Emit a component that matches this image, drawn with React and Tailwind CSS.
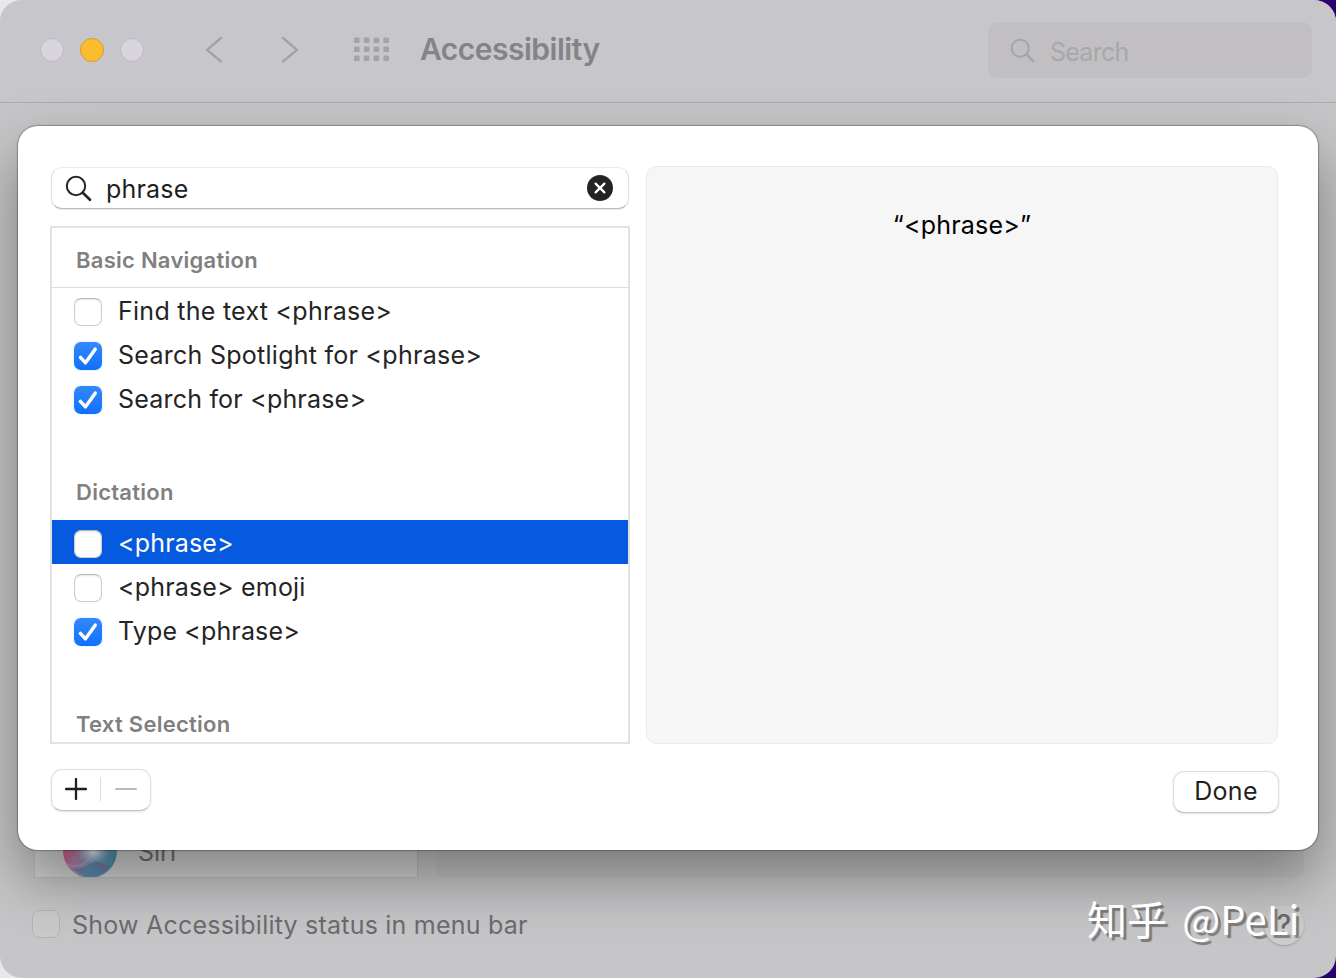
import { useState } from "react";

const sections = [
  {
    title: "Basic Navigation",
    pinned: true,
    commands: [
      { label: "Find the text <phrase>", checked: false, tracking: "tracking-[0.27px]" },
      { label: "Search Spotlight for <phrase>", checked: true, tracking: "tracking-[0.27px]" },
      { label: "Search for <phrase>", checked: true, tracking: "tracking-[0.2px]" },
    ],
  },
  {
    title: "Dictation",
    commands: [
      { label: "<phrase>", checked: false, tracking: "tracking-[0.18px]" },
      { label: "<phrase> emoji", checked: false, tracking: "tracking-[0.18px]" },
      { label: "Type <phrase>", checked: true, tracking: "tracking-[0.15px]" },
    ],
  },
  {
    title: "Text Selection",
    commands: [],
  },
];

export default function App() {
  return (
    <div className="relative h-[978px] w-[1336px] overflow-hidden bg-[linear-gradient(90deg,#e8e8ea_50%,#2a0070_50%)] font-[Inter,'Liberation_Sans',sans-serif]">
      <PreferencesWindow />
      <CommandsSheet />
      <Watermark />
    </div>
  );
}

function PreferencesWindow() {
  return (
    <div className="flex h-full flex-col overflow-hidden rounded-[22px] bg-[#c6c6c8]">
      <header className="flex h-[103px] shrink-0 items-start border-b border-[#acacae] bg-[#c7c6cb] pt-[22px] pr-6 pl-10">
        <div className="flex h-14 items-center gap-4">
          <span className="size-6 rounded-full border border-[#bdb9c2] bg-[#d8d3dd]" />
          <span className="size-6 rounded-full border border-[#d99b2b] bg-[#fdbc2e]" />
          <span className="size-6 rounded-full border border-[#bdb9c2] bg-[#d8d3dd]" />
        </div>

        <svg className="mt-[14px] ml-[61px] h-7 w-[94px]" viewBox="0 0 94 28" fill="none" stroke="#a3a2a6" strokeWidth="2.4" strokeLinecap="round" strokeLinejoin="round">
          <path d="M16 2 2 13.8 16 25.5" />
          <path d="M78 2 92 13.8 78 25.5" />
        </svg>

        <svg className="mt-[15px] ml-[55px] h-[25px] w-9" viewBox="0 0 36 25" fill="#a3a2a6">
          {[0, 9.8, 19.6, 29.4].map((x) =>
            [0.5, 9.5, 18.5].map((y) => (
              <rect key={`${x}-${y}`} x={x} y={y} width="5.6" height="5.6" rx="1.2" />
            ))
          )}
        </svg>

        <h1 className="ml-[30px] text-[30px] leading-[54px] font-semibold tracking-[-0.5px] whitespace-nowrap text-[#848388]">
          Accessibility
        </h1>

        <div className="ml-auto flex h-14 w-[324px] items-center rounded-[10px] bg-[#c1bfc1] pl-[22px]">
          <SearchIcon className="size-[25px] text-[#a5a4a7]" strokeWidth="2.1" />
          <span className="mt-[3px] ml-[15px] text-[25px] leading-8 tracking-[-0.75px] text-[#a8a7aa]">Search</span>
        </div>
      </header>

      <main className="flex flex-1 gap-[18px] pt-12 pr-8 pl-[34px]">
        <div className="flex w-[384px] items-end overflow-hidden border border-[#bcbcbd] bg-[#d2d2d2] pl-7">
          <SiriIcon />
          <span className="mb-[9px] ml-[21px] text-[25px] leading-8 text-[#6f6f72]">Siri</span>
        </div>
        <div className="flex-1 rounded-[8px] border border-[#c1c1c3] bg-[#c1c1c3]" />
      </main>

      <footer className="flex h-[100px] shrink-0 items-start justify-between pt-[31px] pr-8 pl-8">
        <div className="flex items-center">
          <span className="mb-0.5 size-7 rounded-[7px] border border-[#b3b3b4] bg-[#cacaca]" />
          <span className="ml-3 text-[25px] leading-8 tracking-[0.22px] whitespace-nowrap text-[#6c6c6f]">
            Show Accessibility status in menu bar
          </span>
        </div>
        <span className="mt-[-4px] flex size-10 items-center justify-center rounded-full bg-[#cdcdce] text-[28px] font-medium text-[#69696b] shadow-[0_1px_2px_rgba(0,0,0,0.2)]">
          ?
        </span>
      </footer>
    </div>
  );
}

function CommandsSheet() {
  const [query, setQuery] = useState("phrase");
  const [selected, setSelected] = useState("<phrase>");

  return (
    <section className="absolute top-[126px] left-[18px] flex h-[724px] w-[1300px] flex-col rounded-[20px] bg-white pt-10 pr-10 pl-8 shadow-[0_0_0_1px_rgba(0,0,0,0.16),0_0_2px_1px_rgba(0,0,0,0.14),0_28px_60px_rgba(0,0,0,0.38)]">
      <div className="flex h-[578px] gap-4">
        <div className="flex w-[580px] flex-col gap-[17px]">
          <div className="mx-px mt-px flex h-[42px] shrink-0 items-center rounded-[11px] border border-t-[#ececec] border-r-[#e2e2e2] border-b-[#bcbcbc] border-l-[#e2e2e2] bg-white pr-[15px] pl-[13px] shadow-[0_1px_1px_rgba(0,0,0,0.08)]">
            <SearchIcon className="size-[27px] shrink-0 text-[#262626]" strokeWidth="2" />
            <input
              className="mt-px ml-[14px] w-0 flex-1 bg-transparent text-[25px] leading-8 tracking-[0.2px] text-[#1f1f1f] outline-none"
              value={query}
              onChange={(event) => setQuery(event.target.value)}
            />
            <button type="button" aria-label="Clear" onClick={() => setQuery("")}>
              <svg className="size-[26px]" viewBox="0 0 26 26">
                <circle cx="13" cy="13" r="13" fill="#242424" />
                <path d="m8.6 8.6 8.8 8.8m0-8.8-8.8 8.8" stroke="#fff" strokeWidth="2.3" strokeLinecap="round" />
              </svg>
            </button>
          </div>

          <div className="h-[518px] overflow-hidden border-2 border-[#e2e2e2]">
            {sections.map((section) => (
              <div key={section.title} className="mb-10">
                <h2
                  className={`h-[60px] pt-4 pl-6 text-[22px] leading-8 font-semibold tracking-[0.26px] text-[#808080] ${
                    section.pinned ? "border-b border-[#dcdcdc]" : ""
                  }`}
                >
                  {section.title}
                </h2>
                {section.commands.map((command) => (
                  <CommandRow
                    key={command.label}
                    command={command}
                    selected={command.label === selected}
                    onSelect={() => setSelected(command.label)}
                  />
                ))}
              </div>
            ))}
          </div>
        </div>

        <div className="flex-1 rounded-[10px] border border-[#ebebeb] bg-[#f6f6f6] pt-[42px] text-center text-[25px] leading-8 tracking-[0.2px] text-black">
          “{selected}”
        </div>
      </div>

      <div className="mt-[25px] flex items-start justify-between pl-px">
        <div className="flex h-[42px] w-[100px] items-center rounded-[11px] border border-[#dedede] border-b-[#c4c4c4] pb-[2px] shadow-[0_1px_2px_rgba(0,0,0,0.12)]">
          <button type="button" aria-label="Add" className="flex w-[47px] items-center justify-center">
            <svg className="size-[22px]" viewBox="0 0 22 22" stroke="#1f1f1f" strokeWidth="2.3" strokeLinecap="round">
              <path d="M11 1v20M1 11h20" />
            </svg>
          </button>
          <span className="ml-px h-6 w-px bg-[#dcdcdc]" />
          <button type="button" aria-label="Remove" className="flex w-[49px] items-center justify-center">
            <svg className="size-[22px]" viewBox="0 0 22 22" stroke="#b9b9b9" strokeWidth="2" strokeLinecap="round">
              <path d="M1 11h20" />
            </svg>
          </button>
        </div>

        <button
          type="button"
          className="mt-0.5 mr-[-1px] h-[42px] w-[106px] rounded-[11px] border border-[#dedede] border-b-[#c4c4c4] bg-white pb-[2px] text-[25px] leading-8 tracking-[0.3px] text-[#1f1f1f] shadow-[0_1px_2px_rgba(0,0,0,0.12)]"
        >
          Done
        </button>
      </div>
    </section>
  );
}

function CommandRow({ command, selected, onSelect }) {
  return (
    <div
      className={`flex h-11 items-center pl-[22px] ${
        selected ? "bg-[#065ae0] text-white" : "text-[#242424]"
      }`}
      onClick={onSelect}
    >
      <Checkbox checked={command.checked} />
      <span className={`mt-0.5 ml-4 text-[25px] leading-8 whitespace-nowrap ${command.tracking}`}>
        {command.label}
      </span>
    </div>
  );
}

function Checkbox({ checked }) {
  if (!checked) {
    return (
      <span className="mt-1 size-7 shrink-0 rounded-[7px] border border-[#cccccc] border-t-[#b8b8b8] bg-white shadow-[inset_0_1px_2px_rgba(0,0,0,0.1)]" />
    );
  }

  return (
    <span className="mt-1 size-7 shrink-0 rounded-[7px] bg-linear-to-b from-[#3289fb] to-[#0f6ffb] shadow-[0_0_2px_rgba(20,115,255,0.3)]">
      <svg className="size-7" viewBox="0 0 28 28" fill="none" stroke="#fff" strokeWidth="3.5" strokeLinecap="round" strokeLinejoin="round">
        <path d="m6.4 15.4 5.1 5.4L21.2 7.2" />
      </svg>
    </span>
  );
}

function SearchIcon({ className, strokeWidth }) {
  return (
    <svg className={className} viewBox="0 0 27 27" fill="none" stroke="currentColor" strokeWidth={strokeWidth} strokeLinecap="round">
      <circle cx="11" cy="11" r="9.2" />
      <path d="m17.8 17.8 7.2 7" strokeWidth="2.7" />
    </svg>
  );
}

function SiriIcon() {
  return (
    <svg className="h-[54px] w-[54px]" viewBox="0 0 54 54">
      <defs>
        <linearGradient id="siri" x1="0" x2="1" y1="0.3" y2="0.7">
          <stop offset="0" stopColor="#e04f86" />
          <stop offset="0.3" stopColor="#b882ac" />
          <stop offset="0.6" stopColor="#7ba3c4" />
          <stop offset="1" stopColor="#4a8fa8" />
        </linearGradient>
        <radialGradient id="siriGlow">
          <stop offset="0" stopColor="#fff" stopOpacity="0.95" />
          <stop offset="1" stopColor="#b9d5ea" stopOpacity="0" />
        </radialGradient>
      </defs>
      <circle cx="27" cy="28" r="27" fill="url(#siri)" />
      <path d="M10 46Q22 46 32 37 42 42 48 43 38 56 22 54Z" fill="#5583a8" opacity="0.7" />
      <path d="M3 41Q18 48 29 32" fill="none" stroke="#d5a5c2" strokeWidth="1.2" opacity="0.7" />
      <path d="M36 42 44 45" stroke="#ca5781" strokeWidth="2" opacity="0.7" />
      <ellipse cx="30" cy="29" rx="16" ry="12" fill="url(#siriGlow)" />
    </svg>
  );
}

function Watermark() {
  return (
    <div className="absolute top-[890px] left-[1087px] font-['Noto_Sans_CJK_SC',sans-serif] text-[40px] leading-[56px] [word-spacing:6px] tracking-[0.1px] whitespace-nowrap text-white [text-shadow:3px_3px_1px_rgba(0,0,0,0.38)]">
      知乎 @PeLi
    </div>
  );
}
